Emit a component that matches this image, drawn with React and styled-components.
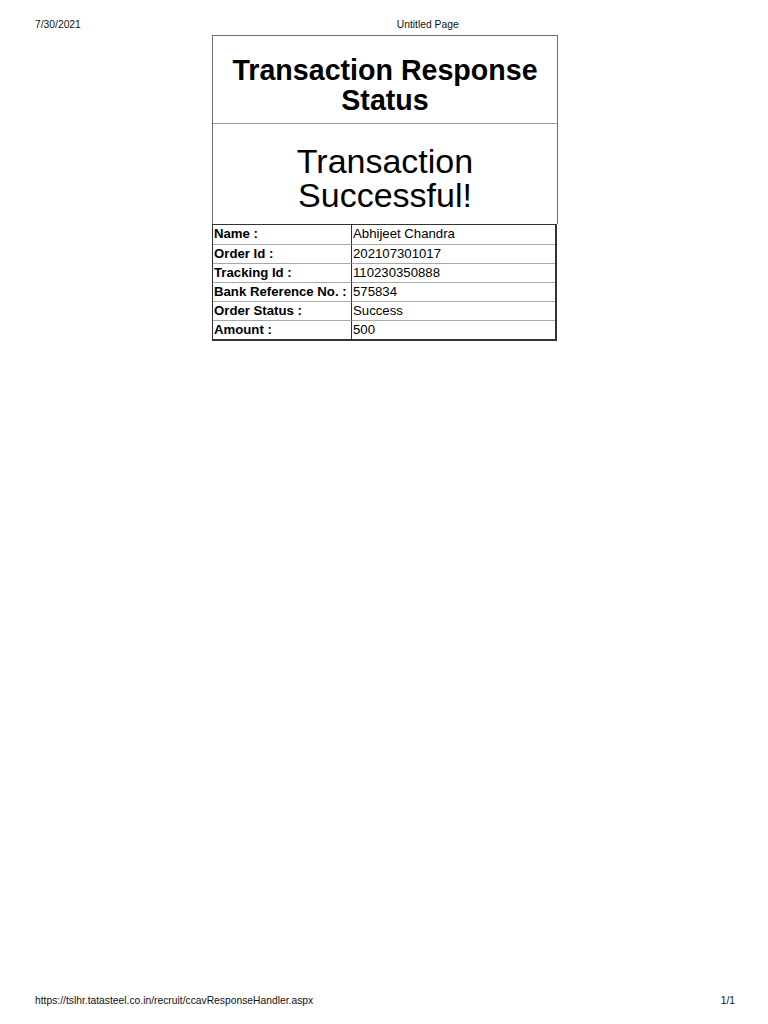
import React from "react";
import styled, { createGlobalStyle } from "styled-components";

const Global = createGlobalStyle`
  html, body { margin: 0; padding: 0; background: #fff; }
  body { font-family: "Liberation Sans", Arial, sans-serif; color: #000; }
`;

const Page = styled.div`
  width: 768px;
  height: 1024px;
  display: flex;
  flex-direction: column;
  box-sizing: border-box;
`;

const PrintBar = styled.div`
  display: flex;
  align-items: center;
  justify-content: ${(p) => p.$justify || "flex-start"};
  gap: ${(p) => p.$gap || "0px"};
  padding: 0 33px 0 35px;
  height: 12px;
  margin-top: ${(p) => p.$top || "0px"};
  margin-bottom: ${(p) => p.$bottom || "0px"};
  font-size: 10.3px;
  color: #111;
  white-space: nowrap;
`;

const Spacer = styled.div`
  flex: 1;
`;

const Card = styled.div`
  margin: 5px 0 0 212px;
  width: 346px;
  display: flex;
  flex-direction: column;
`;

const Header = styled.div`
  border: 1px solid #6e6e6e;
  border-bottom: none;
  display: flex;
  flex-direction: column;
`;

const TitleCell = styled.div`
  height: 88px;
  box-sizing: border-box;
  padding-top: 19px;
  border-bottom: 1px solid #9a9a9a;
  text-align: center;
  font-weight: bold;
  font-size: 28.6px;
  line-height: 30px;
`;

const MessageCell = styled.div`
  height: 100px;
  box-sizing: border-box;
  padding-top: 20px;
  text-align: center;
  font-size: 34px;
  line-height: 34px;
`;

const Details = styled.div`
  width: 345px;
  border: 1px solid #333;
  border-right-width: 2px;
  border-bottom-width: 2px;
  box-sizing: border-box;
  display: grid;
  grid-template-columns: 138px 1fr;
`;

const Cell = styled.div`
  height: 19px;
  box-sizing: border-box;
  border-top: ${(p) => (p.$first ? "none" : "1px solid #a8a8a8")};
  border-left: ${(p) => (p.$value ? "1px solid #333" : "none")};
  padding-left: 1px;
  font-size: 13.2px;
  line-height: 18px;
  font-weight: ${(p) => (p.$value ? "normal" : "bold")};
  white-space: nowrap;
`;

const rows = [
  ["Name :", "Abhijeet Chandra"],
  ["Order Id :", "202107301017"],
  ["Tracking Id :", "110230350888"],
  ["Bank Reference No. :", "575834"],
  ["Order Status :", "Success"],
  ["Amount :", "500"],
];

export default function App() {
  return (
    <Page>
      <Global />
      <PrintBar $top="18px" $gap="316px">
        <span>7/30/2021</span>
        <span>Untitled Page</span>
      </PrintBar>
      <Card>
        <Header>
          <TitleCell>
            Transaction Response
            <br />
            Status
          </TitleCell>
          <MessageCell>
            Transaction
            <br />
            Successful!
          </MessageCell>
        </Header>
        <Details>
          {rows.map(([k, v], i) => (
            <React.Fragment key={k}>
              <Cell $first={i === 0}>{k}</Cell>
              <Cell $first={i === 0} $value>
                {v}
              </Cell>
            </React.Fragment>
          ))}
        </Details>
      </Card>
      <Spacer />
      <PrintBar $justify="space-between" $bottom="18px">
        <span>https://tslhr.tatasteel.co.in/recruit/ccavResponseHandler.aspx</span>
        <span>1/1</span>
      </PrintBar>
    </Page>
  );
}
